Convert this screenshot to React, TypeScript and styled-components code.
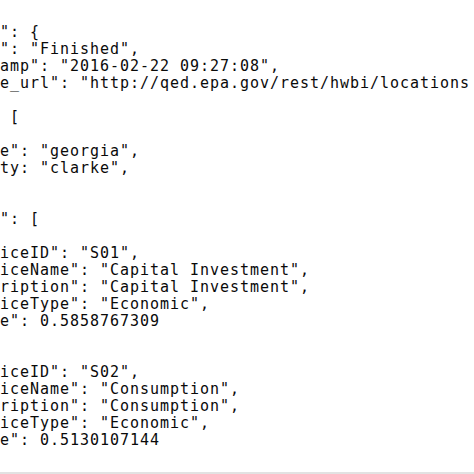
import React from "react";
import styled, { createGlobalStyle } from "styled-components";

const Global = createGlobalStyle`
  html, body { margin: 0; padding: 0; background: #ffffff; }
  #root { width: 474px; height: 474px; }
`;

const Frame = styled.div`
  width: 474px;
  height: 474px;
  display: flex;
  flex-direction: column;
  background: #ffffff;
  overflow: hidden;
`;

const Viewport = styled.div`
  flex: 1;
  overflow: hidden;
  padding-top: 24px;
`;

const Code = styled.pre`
  margin: 0;
  font-family: "DejaVu Sans Mono", monospace;
  font-size: 15px;
  letter-spacing: 0.97px;
  line-height: 17px;
  color: #0a0a0a;
  white-space: pre;
`;

const Line = styled.div`
  height: 17px;
`;

const BottomBar = styled.div`
  height: 2px;
  background: #e2e2e2;
`;

const lines = [
  `": {`,
  `": "Finished",`,
  `amp": "2016-02-22 09:27:08",`,
  `e_url": "http://qed.epa.gov/rest/hwbi/locations`,
  ``,
  ` [`,
  ``,
  `e": "georgia",`,
  `ty: "clarke",`,
  ``,
  ``,
  `": [`,
  ``,
  `iceID": "S01",`,
  `iceName": "Capital Investment",`,
  `ription": "Capital Investment",`,
  `iceType": "Economic",`,
  `e": 0.5858767309`,
  ``,
  ``,
  `iceID": "S02",`,
  `iceName": "Consumption",`,
  `ription": "Consumption",`,
  `iceType": "Economic",`,
  `e": 0.5130107144`,
];

export default function App() {
  return (
    <>
      <Global />
      <Frame>
        <Viewport>
          <Code>
            {lines.map((l, i) => (
              <Line key={i}>{l}</Line>
            ))}
          </Code>
        </Viewport>
        <BottomBar />
      </Frame>
    </>
  );
}
